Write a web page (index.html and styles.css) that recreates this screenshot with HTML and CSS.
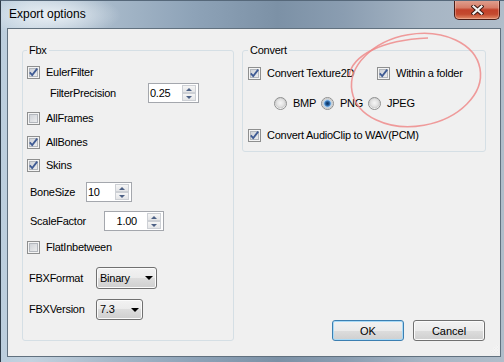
FILE: index.html
```html
<!DOCTYPE html>
<html lang="en">
<head>
    <meta charset="UTF-8">
    <meta name="viewport" content="width=device-width, initial-scale=1.0">
    <title>Export options</title>
    <link rel="stylesheet" href="styles.css">
</head>
<body>
    <div class="window">
        <div class="titlebar">
            <span class="title">Export options</span>
            <div class="close-btn">
                <svg width="13" height="10" viewBox="0 0 13 10">
                    <path class="x-outline" d="M2.5 1.5 L10.5 8.5 M10.5 1.5 L2.5 8.5"/>
                    <path class="x-fill" d="M2.5 1.5 L10.5 8.5 M10.5 1.5 L2.5 8.5"/>
                </svg>
            </div>
        </div>

        <div class="client">
            <!-- Fbx options -->
            <div class="group fbx">
                <div class="group-title">Fbx</div>

                <div class="row m9">
                    <span class="check"><svg viewBox="0 0 11 11"><path d="M1.8 5.3 L4.2 8 L9.2 1.6"/></svg></span>
                    <span class="label">EulerFilter</span>
                </div>
                <div class="row m4">
                    <span class="field-label precision-label">FilterPrecision</span>
                    <div class="spin precision-spin">
                        <span class="spin-val">0.25</span>
                        <span class="spin-btns"><span class="spin-up"></span><span class="spin-down"></span></span>
                    </div>
                </div>
                <div class="row m9">
                    <span class="check"></span>
                    <span class="label">AllFrames</span>
                </div>
                <div class="row m11">
                    <span class="check"><svg viewBox="0 0 11 11"><path d="M1.8 5.3 L4.2 8 L9.2 1.6"/></svg></span>
                    <span class="label">AllBones</span>
                </div>
                <div class="row m10">
                    <span class="check"><svg viewBox="0 0 11 11"><path d="M1.8 5.3 L4.2 8 L9.2 1.6"/></svg></span>
                    <span class="label">Skins</span>
                </div>
                <div class="row m10">
                    <span class="field-label bone-label">BoneSize</span>
                    <div class="spin bone-spin">
                        <span class="spin-val">10</span>
                        <span class="spin-btns"><span class="spin-up"></span><span class="spin-down"></span></span>
                    </div>
                </div>
                <div class="row m9">
                    <span class="field-label scale-label">ScaleFactor</span>
                    <div class="spin scale-spin">
                        <span class="spin-val right">1.00</span>
                        <span class="spin-btns"><span class="spin-up"></span><span class="spin-down"></span></span>
                    </div>
                </div>
                <div class="row m10">
                    <span class="check"></span>
                    <span class="label">FlatInbetween</span>
                </div>
                <div class="row m13">
                    <span class="field-label fbx-label">FBXFormat</span>
                    <div class="combo format-combo"><span>Binary</span><span class="arrow"></span></div>
                </div>
                <div class="row m10">
                    <span class="field-label fbx-label">FBXVersion</span>
                    <div class="combo version-combo"><span>7.3</span><span class="arrow"></span></div>
                </div>
            </div>

            <div class="side">
                <!-- Convert options -->
                <div class="group convert">
                    <div class="group-title">Convert</div>

                    <div class="row m10">
                        <span class="opt texture-opt">
                            <span class="check"><svg viewBox="0 0 11 11"><path d="M1.8 5.3 L4.2 8 L9.2 1.6"/></svg></span>
                            <span class="label">Convert Texture2D</span>
                        </span>
                        <span class="opt">
                            <span class="check"><svg viewBox="0 0 11 11"><path d="M1.8 5.3 L4.2 8 L9.2 1.6"/></svg></span>
                            <span class="label">Within a folder</span>
                        </span>
                    </div>
                    <div class="row m17 radios">
                        <span class="opt radio-opt"><span class="radio"></span><span class="label">BMP</span></span>
                        <span class="opt radio-opt"><span class="radio on"></span><span class="label">PNG</span></span>
                        <span class="opt"><span class="radio"></span><span class="label">JPEG</span></span>
                    </div>
                    <div class="row m19">
                        <span class="check"><svg viewBox="0 0 11 11"><path d="M1.8 5.3 L4.2 8 L9.2 1.6"/></svg></span>
                        <span class="label">Convert AudioClip to WAV(PCM)</span>
                    </div>
                </div>

                <div class="buttons">
                    <button class="btn default">OK</button>
                    <button class="btn">Cancel</button>
                </div>
            </div>

            <!-- size grip in the corner -->
            <svg class="grip" width="10" height="10" viewBox="0 0 10 10">
                <rect x="8" y="0" width="1" height="1" class="dot"/>
                <rect x="8" y="3" width="1" height="1" class="dot"/>
                <rect x="5" y="3" width="1" height="1" class="dot"/>
                <rect x="8" y="6" width="1" height="1" class="dot"/>
                <rect x="5" y="6" width="1" height="1" class="dot"/>
                <rect x="2" y="6" width="1" height="1" class="dot"/>
            </svg>
        </div>

        <!-- hand drawn marker round "Within a folder" -->
        <svg class="annotation" width="504" height="362" viewBox="0 0 504 362">
            <ellipse cx="416" cy="80" rx="65" ry="46" transform="rotate(-10 416 80)"/>
            <path d="M349 76 C352 56 380 40 428 38"/>
        </svg>
    </div>
</body>
</html>
```

FILE: styles.css
```css
body {
    margin: 0;
    font-family: "Liberation Sans", Arial, sans-serif;
    font-size: 11px;
    letter-spacing: -0.25px;
    color: #000;
    background: #fff;
}
.window {
    position: relative;
    width: 504px;
    height: 362px;
    box-sizing: border-box;
    border-top: 1px solid #56687a;
    border-left: 1px solid #2e3b48;
    display: flex;
    flex-direction: column;
    overflow: hidden;
    background:
        radial-gradient(ellipse 70px 22px at 50px 14px, rgba(236, 242, 247, 0.95), rgba(236, 242, 247, 0) 100%),
        linear-gradient(90deg, #bccedd 0, #c3d2df 6%, #a6b8c9 22%, #8ea3b8 38%, #7c91a6 55%, #8a9db1 68%, #a6b5c4 84%, #b0bdca 100%);
}
.titlebar {
    height: 27px;
    flex: none;
    display: flex;
    justify-content: space-between;
    align-items: flex-start;
}
.title {
    padding: 6px 0 0 8px;
    font-size: 12px;
    line-height: 15px;
    letter-spacing: 0;
}
.close-btn {
    width: 46px;
    height: 20px;
    margin: -1px 4px 0 0;
    box-sizing: border-box;
    border: 1px solid #4a1d16;
    border-top: none;
    border-radius: 0 0 5px 5px;
    background: linear-gradient(#e0a393 0, #d67d68 40%, #c2412a 52%, #c44a2f 75%, #e28a67 100%);
    box-shadow: inset 0 0 0 1px rgba(255, 220, 210, 0.35);
    display: flex;
    align-items: center;
    justify-content: center;
}
.x-outline {
    stroke: #3d1a14;
    stroke-width: 4.2;
    stroke-linecap: square;
    fill: none;
}
.x-fill {
    stroke: #f4f4f4;
    stroke-width: 2.2;
    stroke-linecap: square;
    fill: none;
}
.client {
    position: relative;
    flex: 1;
    margin: 0 3px 5px 6px;
    border: 1px solid #61717f;
    background: #f0f0f0;
    display: flex;
    gap: 8px;
    padding: 21px 14px 15px 14px;
}
.group {
    border: 1px solid #d5dfe5;
    border-radius: 3px;
    box-sizing: border-box;
    display: flex;
    flex-direction: column;
    align-items: flex-start;
}
.fbx {
    width: 212px;
    padding: 0 0 0 4px;
}
.convert {
    width: 244px;
    padding: 0 0 9px 5px;
}
.group-title {
    margin-top: -7px;
    padding: 0 2px;
    line-height: 13px;
    background: #f0f0f0;
}
.side {
    display: flex;
    flex-direction: column;
    justify-content: space-between;
}
.row {
    display: flex;
    align-items: center;
    line-height: 13px;
}
.m4 { margin-top: 4px; }
.m9 { margin-top: 9px; }
.m10 { margin-top: 10px; }
.m11 { margin-top: 11px; }
.m13 { margin-top: 13px; }
.m17 { margin-top: 17px; }
.m19 { margin-top: 19px; }

.check {
    width: 13px;
    height: 13px;
    flex: none;
    box-sizing: border-box;
    border: 1px solid #8e8f8f;
    background: linear-gradient(135deg, #c8ccd2, #f3f3f3);
    box-shadow: inset 0 0 0 1px #f4f4f4, inset 0 0 0 2px #b3b7bd;
    margin-right: 6px;
}
.check svg {
    display: block;
    width: 11px;
    height: 11px;
}
.check path {
    fill: none;
    stroke: #3f5b94;
    stroke-width: 1.8;
}
.radio {
    width: 13px;
    height: 13px;
    flex: none;
    box-sizing: border-box;
    border-radius: 50%;
    border: 1px solid #8e8f8f;
    background: radial-gradient(circle at 50% 45%, #f6f6f6 0, #e2e2e2 3.5px, #cfcfcf 5px, #f0f0f0 5.5px);
    margin-right: 6px;
}
.radio.on {
    background: radial-gradient(circle, #0e3563 0, #1d4f88 1.6px, #4c8ccc 2.8px, #a9cff0 3.6px, #d2d2d2 4.4px, #cfcfcf 5px, #f0f0f0 5.5px);
}
.texture-opt {
    width: 129px;
}
.opt {
    display: flex;
    align-items: center;
}
.radios {
    margin-left: 26px;
}
.radio-opt {
    width: 47px;
}

.field-label {
    flex: none;
}
.precision-label { margin-left: 23px; width: 98px; }
.bone-label { margin-left: 3px; width: 56px; }
.scale-label { margin-left: 3px; width: 74px; }
.fbx-label { margin-left: 2px; width: 67px; }

.spin {
    height: 20px;
    box-sizing: border-box;
    border: 1px solid #a4a7ad;
    background: #fff;
    display: flex;
    align-items: stretch;
}
.precision-spin { width: 51px; }
.bone-spin { width: 46px; }
.scale-spin { width: 60px; }
.spin-val {
    flex: 1;
    padding-left: 1px;
    line-height: 18px;
}
.spin-val.right {
    text-align: right;
    padding-right: 10px;
}
.spin-btns {
    width: 14px;
    margin: 1px 2px 1px 0;
    display: flex;
    flex-direction: column;
}
.spin-up,
.spin-down {
    flex: 1;
    box-sizing: border-box;
    border: 1px solid #cdd0d5;
    background: linear-gradient(#f6f6f6, #e4e5e7);
    display: flex;
    align-items: center;
    justify-content: center;
}
.spin-up::after {
    content: "";
    border-left: 3px solid transparent;
    border-right: 3px solid transparent;
    border-bottom: 3px solid #4d6185;
}
.spin-down::after {
    content: "";
    border-left: 3px solid transparent;
    border-right: 3px solid transparent;
    border-top: 3px solid #4d6185;
}

.combo,
.btn {
    box-sizing: border-box;
    border: 1px solid #707070;
    border-radius: 3px;
    background: linear-gradient(#f2f2f2 0, #ebebeb 50%, #dddddd 50%, #cfcfcf 100%);
    box-shadow: inset 0 0 0 1px #fbfbfb;
}
.combo {
    display: flex;
    align-items: center;
    justify-content: space-between;
    padding: 0 3px 0 3px;
}
.format-combo { width: 61px; height: 22px; }
.version-combo { width: 47px; height: 21px; }
.arrow {
    border-left: 4px solid transparent;
    border-right: 4px solid transparent;
    border-top: 4px solid #000;
}

.buttons {
    display: flex;
    justify-content: flex-end;
    gap: 9px;
    padding-right: 1px;
}
.btn {
    width: 72px;
    height: 21px;
    padding: 0;
    font: inherit;
    color: #000;
}
.btn.default {
    border-color: #3c7fb1;
    box-shadow: inset 0 0 0 1px #a8daf7;
}
.grip {
    position: absolute;
    right: 1px;
    bottom: 1px;
}
.dot {
    fill: #a9a9a9;
    stroke: #fff;
    stroke-width: 0.5;
}
.annotation {
    position: absolute;
    top: -1px;
    left: -1px;
    pointer-events: none;
}
.annotation ellipse,
.annotation path {
    fill: none;
    stroke: #ee8b8b;
    stroke-width: 1.6;
    opacity: 0.85;
}
```
